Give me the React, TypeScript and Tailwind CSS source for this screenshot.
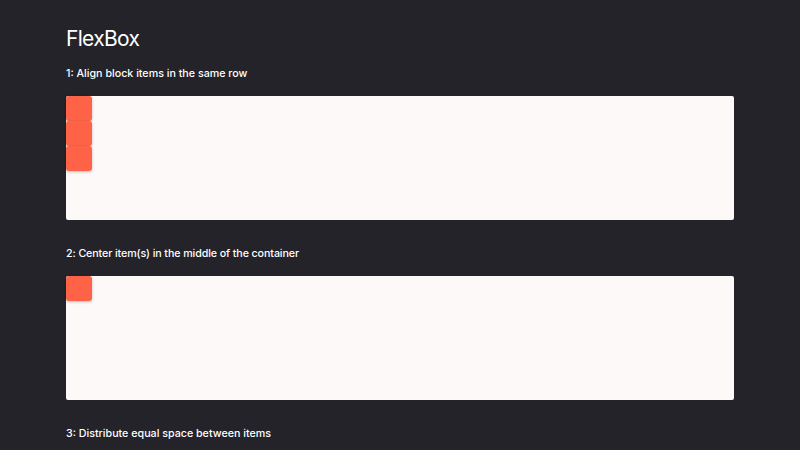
import React from "react";

const Box = () => (
  <div className="w-[26px] h-[25px] bg-[#ff6347] rounded-[3px] shadow-[0_1px_3px_rgba(0,0,0,0.25)]" />
);

export default function App() {
  return (
    <div
      className="min-h-screen bg-[#25232a] pl-[66px] pr-[66px] pt-[25px] text-white"
      style={{ fontFamily: "Inter, 'Open Sans', sans-serif" }}
    >
      <h1 className="text-[21px] leading-[28px] font-normal tracking-[-0.7px]">FlexBox</h1>
      <p className="mt-[13px] text-[10.7px] leading-[16px] font-medium">1: Align block items in the same row</p>
      <div className="mt-[14px] h-[124px] w-[668px] bg-[#fdf9f8] rounded-[2px] flex flex-col">
        <Box />
        <Box />
        <Box />
      </div>
      <p className="mt-[26px] text-[10.7px] leading-[16px] font-medium tracking-[-0.1px]">2: Center item(s) in the middle of the container</p>
      <div className="mt-[14px] h-[124px] w-[668px] bg-[#fdf9f8] rounded-[2px] flex flex-col">
        <Box />
      </div>
      <p className="mt-[26px] text-[10.7px] leading-[16px] font-medium">3: Distribute equal space between items</p>
    </div>
  );
}
